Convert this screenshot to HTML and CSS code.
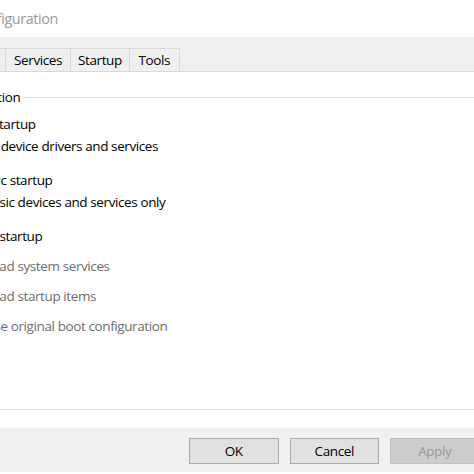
FILE: index.html
```html
<!DOCTYPE html>
<html lang="en">
<head>
<meta charset="utf-8">
<title>System Configuration</title>
<link rel="stylesheet" href="styles.css">
</head>
<body>
<div class="dialog">
  <div class="titlebar"><span class="title">System Configuration</span></div>
  <div class="tabband">
    <div class="tab tab-general">General</div>
    <div class="tab tab-boot">Boot</div>
    <div class="tab tab-services">Services</div>
    <div class="tab tab-startup">Startup</div>
    <div class="tab tab-tools">Tools</div>
  </div>
  <div class="panel">
    <div class="legend-row"><span class="legend">Startup selection</span></div>
    <div class="group-body">
      <div class="option">
        <div class="radio-row"><span class="radio"></span>Normal startup</div>
        <div class="desc">Load all device drivers and services</div>
      </div>
      <div class="option">
        <div class="radio-row"><span class="radio"></span>Diagnostic startup</div>
        <div class="desc">Load basic devices and services only</div>
      </div>
      <div class="option option-last">
        <div class="radio-row"><span class="radio"></span>Selective startup</div>
      </div>
      <div class="check-row"><span class="check"></span>Load system services</div>
      <div class="check-row"><span class="check"></span>Load startup items</div>
      <div class="check-row"><span class="check"></span>Use original boot configuration</div>
    </div>
  </div>
  <div class="buttonbar">
    <button class="btn">OK</button>
    <button class="btn">Cancel</button>
    <button class="btn btn-disabled">Apply</button>
    <button class="btn">Help</button>
  </div>
</div>
</body>
</html>
```
FILE: styles.css
```css
html, body {
  margin: 0;
  padding: 0;
  background: #ffffff;
  overflow: hidden;
}
body {
  width: 474px;
  height: 474px;
  font-family: "Open Sans", "Noto Sans", sans-serif;
  font-size: 13.5px;
  letter-spacing: -0.4px;
  color: #000000;
}
.dialog {
  margin-left: -100px;
  width: 680px;
}
.titlebar {
  height: 37px;
  display: flex;
  align-items: center;
  padding-left: 22px;
  font-size: 14.4px;
  color: #999999;
}
.tabband {
  height: 34px;
  box-sizing: border-box;
  padding-top: 11px;
  background: #f0f0f0;
  display: flex;
}
.tab {
  height: 23px;
  box-sizing: border-box;
  line-height: 22px;
  padding: 0 8px;
  border: 1px solid #d9d9d9;
  border-bottom: none;
  margin-right: -1px;
  background: #f0f0f0;
  text-align: center;
}
.tab-general {
  margin-left: -4px;
  background: #ffffff;
}
.tab-startup { padding: 0 7px; }
.tab-tools { min-width: 51px; }
.panel {
  border-top: 1px solid #d9d9d9;
  height: 356px;
  overflow: hidden;
}
.legend-row {
  margin-top: 16px;
  height: 18px;
  display: flex;
  align-items: center;
  padding-left: 21px;
}
.legend {
  line-height: 18px;
  padding-right: 3px;
}
.legend-row::after {
  content: "";
  flex: 1;
  height: 1px;
  background: #dcdcdc;
}
.group-body {
  height: 296px;
  padding-top: 7px;
  border-bottom: 1px solid #dcdcdc;
}
.option {
  margin-bottom: 11px;
}
.option-last {
  margin-bottom: 4px;
}
.radio-row {
  line-height: 22px;
  padding-left: 27px;
  display: flex;
  align-items: center;
}
.radio {
  width: 11px;
  height: 11px;
  border: 1px solid #333333;
  border-radius: 50%;
  margin-right: 5px;
  flex: none;
}
.desc {
  line-height: 23px;
  padding-left: 52px;
}
.check-row {
  line-height: 30px;
  padding-left: 67px;
  color: #6d6d6d;
  display: flex;
  align-items: center;
}
.check {
  width: 11px;
  height: 11px;
  border: 1px solid #bcbcbc;
  margin-right: 5px;
  flex: none;
}
.buttonbar {
  height: 44px;
  box-sizing: border-box;
  background: #f0f0f0;
  padding-top: 10px;
  padding-left: 289px;
  display: flex;
  gap: 11px;
}
.btn {
  width: 90px;
  height: 26px;
  box-sizing: border-box;
  border: 1px solid #adadad;
  background: #e1e1e1;
  font-family: "Open Sans", "Noto Sans", sans-serif;
  font-size: 13.5px;
  letter-spacing: -0.4px;
  color: #000000;
  padding: 0;
  line-height: 23px;
}
.btn-disabled {
  background: #cccccc;
  border-color: #bfbfbf;
  color: #999999;
}
```
